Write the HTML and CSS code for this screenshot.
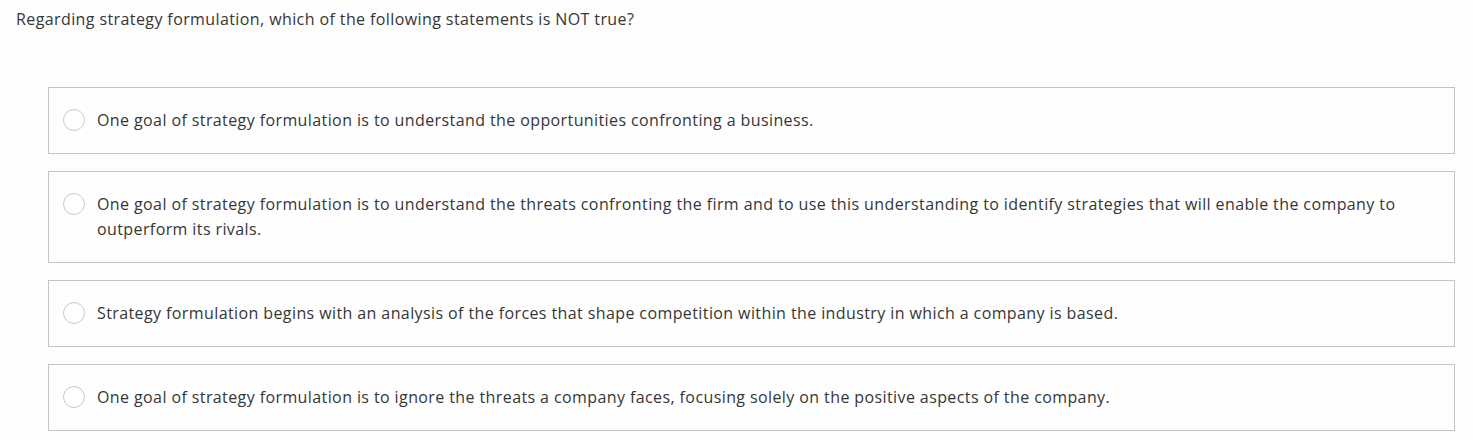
FILE: index.html
```html
<!DOCTYPE html>
<html>
<head>
<meta charset="utf-8">
<link rel="stylesheet" href="styles.css">
</head>
<body>
<div class="page">
  <p class="question">Regarding strategy formulation, which of the following statements is NOT true?</p>
  <div class="options">
    <label class="option"><span class="radio"></span><span class="text">One goal of strategy formulation is to understand the opportunities confronting a business.</span></label>
    <label class="option"><span class="radio"></span><span class="text">One goal of strategy formulation is to understand the threats confronting the firm and to use this understanding to identify strategies that will enable the company to outperform its rivals.</span></label>
    <label class="option"><span class="radio"></span><span class="text">Strategy formulation begins with an analysis of the forces that shape competition within the industry in which a company is based.</span></label>
    <label class="option"><span class="radio"></span><span class="text">One goal of strategy formulation is to ignore the threats a company faces, focusing solely on the positive aspects of the company.</span></label>
  </div>
</div>
</body>
</html>
```

FILE: styles.css
```css
html, body {
  margin: 0;
  padding: 0;
  background: #fdfdfd;
}
.page {
  font-family: "Open Sans", "Liberation Sans", sans-serif;
  font-size: 16px;
  letter-spacing: 0.4px;
  color: #363636;
  padding: 8px 18px 0 16px;
}
.question {
  margin: 0;
  line-height: 22px;
}
.options {
  display: flex;
  flex-direction: column;
  gap: 17px;
  margin-top: 57px;
  margin-left: 32px;
}
.option {
  display: flex;
  align-items: flex-start;
  border: 1px solid #c4c4c4;
  background: #fefefe;
  padding: 20px 40px 20px 14px;
  line-height: 25px;
}
.radio {
  flex: none;
  width: 20px;
  height: 20px;
  border: 1px solid #c8c8c8;
  border-radius: 50%;
  background: #fff;
  margin-top: 1px;
  margin-right: 12px;
}
.text {
  display: block;
}
```
